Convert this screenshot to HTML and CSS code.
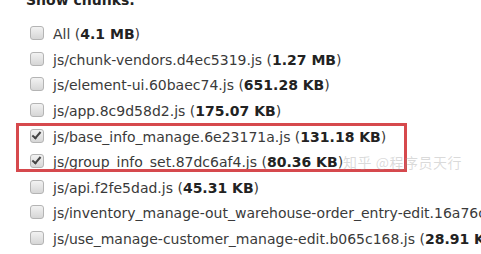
FILE: index.html
```html
<!DOCTYPE html>
<html>
<head>
<meta charset="utf-8">
<link rel="stylesheet" href="styles.css">
</head>
<body>
<div class="panel">
  <div class="title">Show chunks:</div>
  <ul class="chunks">
    <li><span class="cb"></span><span>All (<b>4.1 MB</b>)</span></li>
    <li><span class="cb"></span><span>js/chunk-vendors.d4ec5319.js (<b>1.27 MB</b>)</span></li>
    <li><span class="cb"></span><span>js/element-ui.60baec74.js (<b>651.28 KB</b>)</span></li>
    <li><span class="cb"></span><span>js/app.8c9d58d2.js (<b>175.07 KB</b>)</span></li>
    <li><span class="cb on"></span><span>js/base_info_manage.6e23171a.js (<b>131.18 KB</b>)</span></li>
    <li><span class="cb on"></span><span>js/group_info_set.87dc6af4.js (<b>80.36 KB</b>)</span></li>
    <li><span class="cb"></span><span>js/api.f2fe5dad.js (<b>45.31 KB</b>)</span></li>
    <li><span class="cb"></span><span>js/inventory_manage-out_warehouse-order_entry-edit.16a76c3e.js (<b>30.12 KB</b>)</span></li>
    <li><span class="cb"></span><span>js/use_manage-customer_manage-edit.b065c168.js (<b>28.91 KB</b>)</span></li>
  </ul>
  <div class="mark"></div>
  <div class="wm">知乎 @程序员天行</div>
</div>
</body>
</html>
```
FILE: styles.css
```css
html, body {
  margin: 0;
  padding: 0;
  background: #fff;
  overflow: hidden;
}
.panel {
  position: relative;
  width: 481px;
  height: 254px;
  overflow: hidden;
  font-family: "DejaVu Sans", Verdana, sans-serif;
  font-size: 14px;
  color: #3a3a3a;
}
.title {
  font-weight: bold;
  color: #222;
  line-height: 20px;
  margin-top: -10px;
  padding-left: 26px;
}
.chunks {
  list-style: none;
  margin: 11.5px 0 0 0;
  padding: 0 0 0 30px;
}
.chunks li {
  height: 25.6px;
  display: flex;
  align-items: center;
  white-space: nowrap;
}
.chunks b {
  color: #222;
}
.cb {
  flex: none;
  width: 12px;
  height: 12px;
  border: 1px solid #b4b4b4;
  border-radius: 3px;
  background: linear-gradient(#f2f2f2, #d6d6d6);
  margin-right: 9px;
  margin-top: -2px;
  position: relative;
}
.cb.on::after {
  content: "";
  position: absolute;
  left: 3px;
  top: 0px;
  width: 3px;
  height: 7px;
  border-right: 2px solid #444;
  border-bottom: 2px solid #444;
  transform: rotate(40deg);
}
.mark {
  position: absolute;
  left: 16px;
  top: 123px;
  width: 385px;
  height: 43px;
  border: 3px solid #d6494d;
}
.wm {
  position: absolute;
  left: 343px;
  top: 152px;
  font-family: "Noto Sans CJK SC", sans-serif;
  font-size: 14px;
  color: rgba(150, 150, 150, 0.35);
  letter-spacing: 0.5px;
}
```
